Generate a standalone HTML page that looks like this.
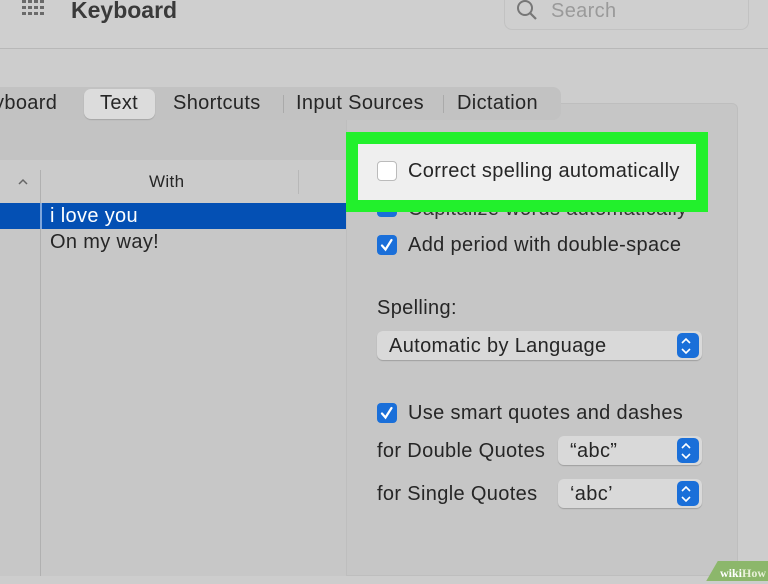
<!DOCTYPE html>
<html><head><style>
*{margin:0;padding:0;box-sizing:border-box}
body{width:768px;height:576px;overflow:hidden;background:#cdcdcd;font-family:"Liberation Sans",sans-serif;color:#262626;position:relative}
.a{position:absolute}
.t{position:absolute;font-size:20px;letter-spacing:0.35px;white-space:nowrap;line-height:22px}
.cb{position:absolute;width:20px;height:20px;border-radius:4px;background:#1a6fd9}
.cb svg{position:absolute;left:2px;top:2px}
.dd{position:absolute;height:29px;border-radius:6px;background:#d9d9d9;box-shadow:0 1px 1px rgba(0,0,0,.2)}
.st{position:absolute;right:3px;top:2px;width:22px;height:25px;border-radius:5px;background:#1a6fd9}
</style></head><body>
<!-- top bar -->
<div class="a" style="left:0;top:0;width:768px;height:49px;background:#cfcfcf;border-bottom:1px solid #b8b8b8"></div>
<svg class="a" style="left:20px;top:0" width="28" height="18"><g fill="#6a6a6a">
<rect x="2" y="0" width="4" height="3"/><rect x="8" y="0" width="4" height="3"/><rect x="14" y="0" width="4" height="3"/><rect x="20" y="0" width="4" height="3"/>
<rect x="2" y="6" width="4" height="3"/><rect x="8" y="6" width="4" height="3"/><rect x="14" y="6" width="4" height="3"/><rect x="20" y="6" width="4" height="3"/>
<rect x="2" y="12" width="4" height="3"/><rect x="8" y="12" width="4" height="3"/><rect x="14" y="12" width="4" height="3"/><rect x="20" y="12" width="4" height="3"/></g></svg>
<div class="t" style="left:71px;top:-1px;font-size:23px;font-weight:bold;color:#3a3a3a;letter-spacing:0">Keyboard</div>
<div class="a" style="left:504px;top:-8px;width:245px;height:38px;border:1px solid #c2c2c2;border-radius:8px;background:#cfcfcf"></div>
<svg class="a" style="left:516px;top:0" width="24" height="22"><circle cx="9" cy="8" r="7" fill="none" stroke="#777" stroke-width="2"/><line x1="14" y1="13" x2="20" y2="19" stroke="#777" stroke-width="2.2"/></svg>
<div class="t" style="left:551px;top:0;color:#9a9a9a">Search</div>
<!-- left table area -->
<div class="a" style="left:0;top:120px;width:346px;height:40px;background:#c3c3c3"></div>
<div class="a" style="left:0;top:160px;width:346px;height:43px;background:#cbcbcb"></div>
<div class="a" style="left:0;top:203px;width:346px;height:373px;background:#c7c7c7"></div>
<div class="a" style="left:40px;top:170px;width:1px;height:406px;background:#b0b0b0"></div>
<div class="a" style="left:298px;top:170px;width:1px;height:24px;background:#b8b8b8"></div>
<svg class="a" style="left:17px;top:177px" width="14" height="10"><path d="M2 7 L6 3 L10 7" fill="none" stroke="#666" stroke-width="1.5"/></svg>
<div class="t" style="left:149px;top:171px;font-size:17px">With</div>
<div class="a" style="left:0;top:203px;width:346px;height:26px;background:#0450b4"></div>
<div class="a" style="left:40px;top:203px;width:2px;height:26px;background:#7fa6db"></div>
<div class="t" style="left:50px;top:205px;color:#fff">i love you</div>
<div class="t" style="left:50px;top:231px">On my way!</div>
<!-- right panel -->
<div class="a" style="left:346px;top:103px;width:392px;height:473px;background:#c6c6c6;border-radius:6px 6px 0 0;border:1px solid #bebebe"></div>
<!-- tab bar -->
<div class="a" style="left:-10px;top:87px;width:571px;height:33px;border-radius:8px;background:#c2c2c2"></div>
<div class="a" style="left:84px;top:89px;width:71px;height:30px;border-radius:7px;background:#dcdcdc;box-shadow:0 1px 1px rgba(0,0,0,.15)"></div>
<div class="t" style="left:-6px;top:92px">yboard</div>
<div class="t" style="left:100px;top:92px">Text</div>
<div class="t" style="left:173px;top:92px">Shortcuts</div>
<div class="a" style="left:283px;top:95px;width:1px;height:18px;background:#aaa"></div>
<div class="t" style="left:296px;top:92px">Input Sources</div>
<div class="a" style="left:443px;top:95px;width:1px;height:18px;background:#aaa"></div>
<div class="t" style="left:457px;top:92px">Dictation</div>
<div class="cb" style="left:377px;top:197px"></div>
<div class="t" style="left:408px;top:198px;color:#333">Capitalize words automatically</div>
<div class="cb" style="left:377px;top:235px"><svg width="16" height="16"><path d="M3 8.5 L6.5 12.5 L12.5 3" fill="none" stroke="#fff" stroke-width="2.2" stroke-linecap="round"/></svg></div>
<div class="t" style="left:408px;top:234px">Add period with double-space</div>
<div class="t" style="left:377px;top:297px">Spelling:</div>
<div class="dd" style="left:377px;top:331px;width:325px"><div class="t" style="left:12px;top:4px">Automatic by Language</div><div class="st"></div></div>
<div class="cb" style="left:377px;top:403px"><svg width="16" height="16"><path d="M3 8.5 L6.5 12.5 L12.5 3" fill="none" stroke="#fff" stroke-width="2.2" stroke-linecap="round"/></svg></div>
<div class="t" style="left:408px;top:402px">Use smart quotes and dashes</div>
<div class="t" style="left:377px;top:440px">for Double Quotes</div>
<div class="dd" style="left:558px;top:436px;width:144px"><div class="t" style="left:12px;top:4px">“abc”</div><div class="st"></div></div>
<div class="t" style="left:377px;top:483px">for Single Quotes</div>
<div class="dd" style="left:558px;top:479px;width:144px"><div class="t" style="left:12px;top:4px">‘abc’</div><div class="st"></div></div>
<!-- stepper arrows -->
<svg class="a" style="left:0;top:0" width="768" height="576" pointer-events="none"><g fill="none" stroke="#fff" stroke-width="1.6">
<path d="M682 343 l4 -4 l4 4 M682 349 l4 4 l4 -4"/>
<path d="M682 448 l4 -4 l4 4 M682 454 l4 4 l4 -4"/>
<path d="M682 491 l4 -4 l4 4 M682 497 l4 4 l4 -4"/></g></svg>
<!-- green highlight -->
<div class="a" style="left:346px;top:132px;width:362px;height:80px;border:12px solid #22f02c;background:#efefef"></div>
<div class="a" style="left:377px;top:161px;width:20px;height:20px;border-radius:4px;background:#fff;border:1px solid #bbb"></div>
<div class="t" style="left:408px;top:160px">Correct spelling automatically</div>
<!-- wikihow -->
<div class="a" style="left:712px;top:561px;width:70px;height:20px;background:#8cb76b;transform:skewX(-30deg)"></div>
<div class="t" style="left:720px;top:562px;font-size:12px;letter-spacing:0;font-family:'Liberation Serif',serif;font-weight:bold;color:#fff">wiki<span style="color:#e8f0d8">How</span></div>
</body></html>
